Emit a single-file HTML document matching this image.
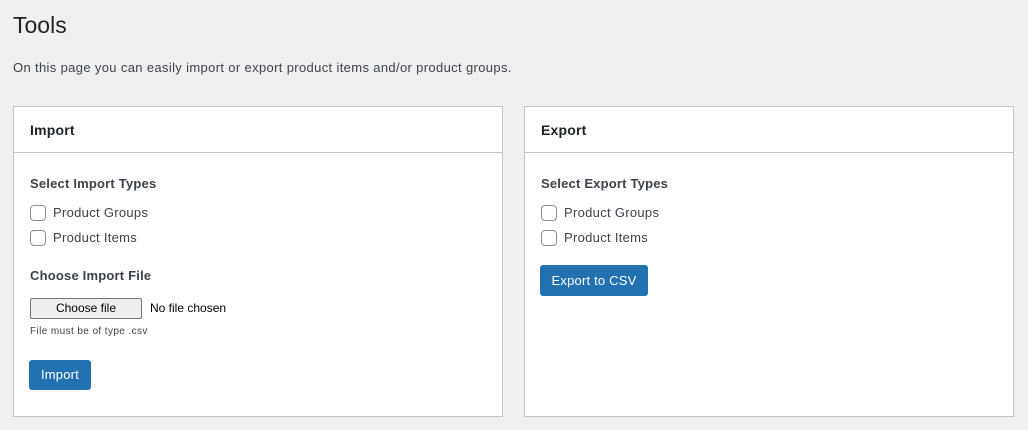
<!DOCTYPE html>
<html><head><style>
body{margin:0;background:#f0f0f1;font-family:"Liberation Sans",sans-serif;color:#1d2327;width:1028px;height:430px;overflow:hidden;position:relative}
.a{position:absolute;white-space:nowrap}
.panel{position:absolute;top:106px;width:488px;height:309px;background:#fff;border:1px solid #c3c4c7}
.hd{position:absolute;left:0;right:0;top:0;height:45px;border-bottom:1px solid #c3c4c7}
.cb{position:absolute;width:14px;height:14px;border:1px solid #8c8f94;border-radius:4px;background:#fff}
.btn{position:absolute;background:#2271b1;color:#fff;border-radius:3px;font-size:13px;text-align:center;letter-spacing:.2px}
.t{letter-spacing:.3px}
.h{letter-spacing:.2px}
</style></head><body>
<div class="a" style="left:13px;top:12px;font-size:23px;font-weight:400">Tools</div>
<div class="a" style="left:13px;top:60px;font-size:13px;color:#3c434a;letter-spacing:.35px">On this page you can easily import or export product items and/or product groups.</div>

<div class="panel" style="left:13px">
 <div class="hd"></div>
 <div class="a h" style="left:16px;top:15px;font-size:14px;font-weight:bold">Import</div>
 <div class="a h" style="left:16px;top:69px;font-size:13px;font-weight:bold;color:#3c434a">Select Import Types</div>
 <div class="cb" style="left:16px;top:98px"></div><div class="a t" style="left:39px;top:98px;font-size:13px;color:#3c434a">Product Groups</div>
 <div class="cb" style="left:16px;top:123px"></div><div class="a t" style="left:39px;top:123px;font-size:13px;color:#3c434a">Product Items</div>
 <div class="a h" style="left:16px;top:161px;font-size:13px;font-weight:bold;color:#3c434a">Choose Import File</div>
 <div class="a" style="left:16px;top:191px;width:110px;height:19px;border:1px solid #767676;border-radius:2px;background:#efefef;font-size:12px;text-align:center;line-height:19px;color:#000">Choose file</div>
 <div class="a" style="left:136px;top:194px;font-size:12px;color:#000">No file chosen</div>
 <div class="a" style="left:16px;top:219px;font-size:10px;color:#3c434a;letter-spacing:.4px">File must be of type .csv</div>
 <div class="btn" style="left:15px;top:253px;width:62px;height:30px;line-height:30px">Import</div>
</div>

<div class="panel" style="left:524px">
 <div class="hd"></div>
 <div class="a h" style="left:16px;top:15px;font-size:14px;font-weight:bold">Export</div>
 <div class="a h" style="left:16px;top:69px;font-size:13px;font-weight:bold;color:#3c434a">Select Export Types</div>
 <div class="cb" style="left:16px;top:98px"></div><div class="a t" style="left:39px;top:98px;font-size:13px;color:#3c434a">Product Groups</div>
 <div class="cb" style="left:16px;top:123px"></div><div class="a t" style="left:39px;top:123px;font-size:13px;color:#3c434a">Product Items</div>
 <div class="btn" style="left:15px;top:158px;width:108px;height:31px;line-height:31px">Export to CSV</div>
</div>
</body></html>
